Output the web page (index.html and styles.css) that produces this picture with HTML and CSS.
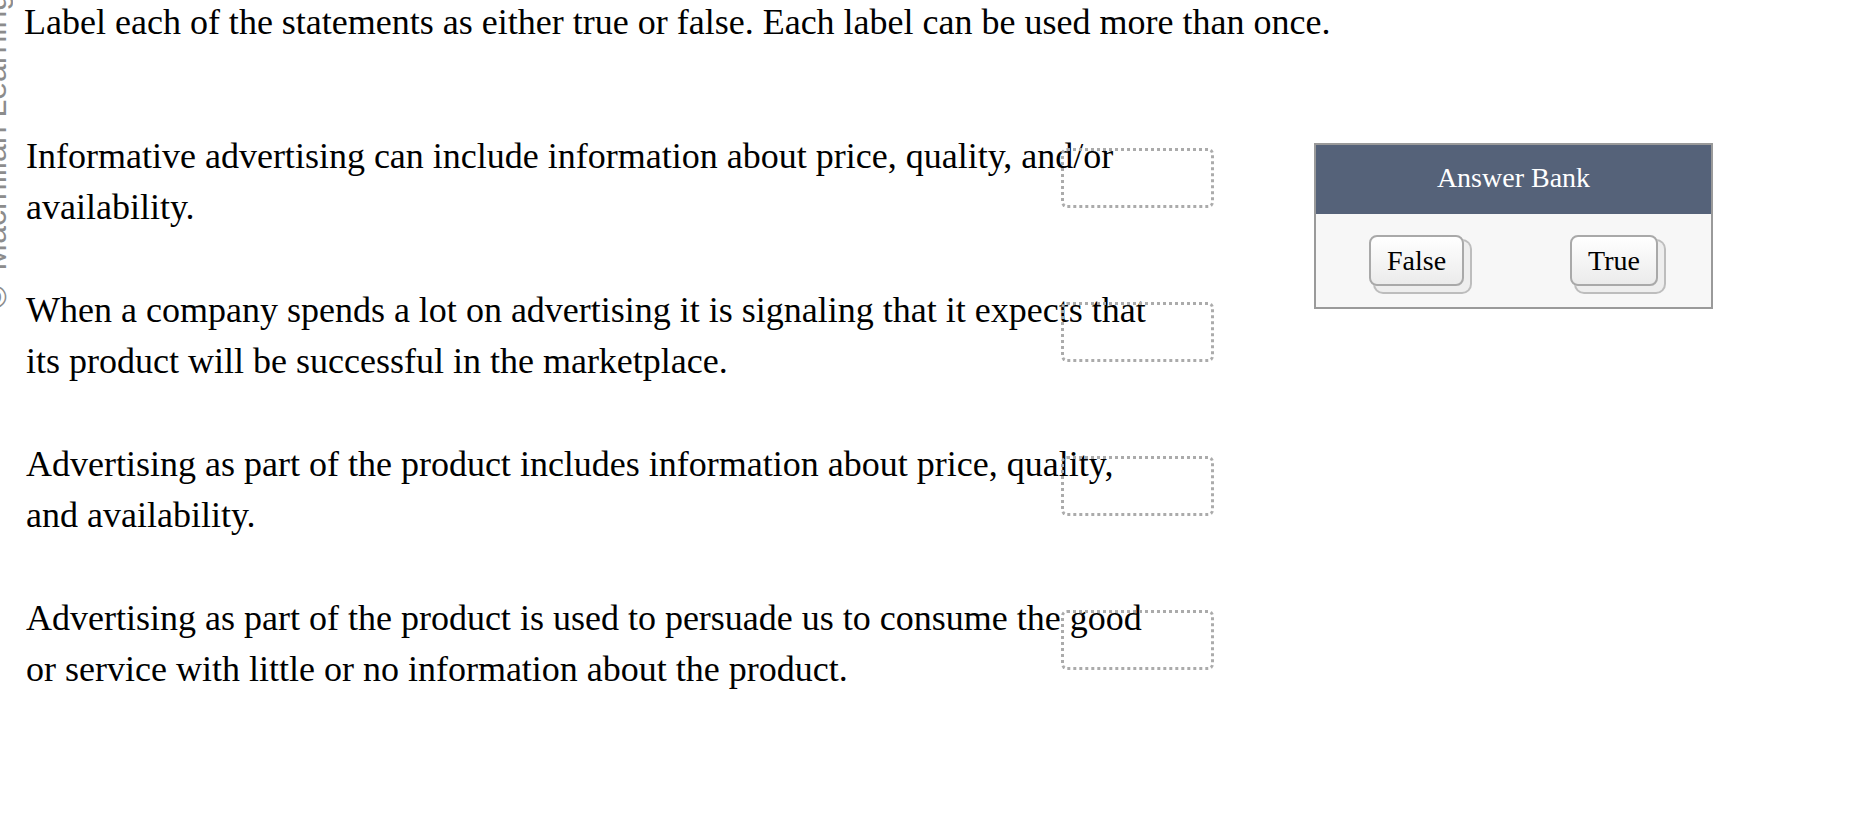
FILE: index.html
```html
<!DOCTYPE html>
<html lang="en">
<head>
<meta charset="utf-8">
<title>Label statements</title>
<link rel="stylesheet" href="styles.css">
</head>
<body>
<div class="watermark">© Macmillan Learning</div>
<h1 class="prompt">Label each of the statements as either true or false. Each label can be used more than once.</h1>
<div class="content">
  <div class="statements">
    <div class="statement">
      <p class="statement-text">Informative advertising can include information about price, quality, and/or availability.</p>
      <div class="drop-zone"></div>
    </div>
    <div class="statement">
      <p class="statement-text">When a company spends a lot on advertising it is signaling that it expects that its product will be successful in the marketplace.</p>
      <div class="drop-zone"></div>
    </div>
    <div class="statement">
      <p class="statement-text">Advertising as part of the product includes information about price, quality, and availability.</p>
      <div class="drop-zone"></div>
    </div>
    <div class="statement">
      <p class="statement-text">Advertising as part of the product is used to persuade us to consume the good or service with little or no information about the product.</p>
      <div class="drop-zone"></div>
    </div>
  </div>
  <div class="bank">
    <div class="bank-header">Answer Bank</div>
    <div class="bank-body">
      <div class="chip">False</div>
      <div class="chip">True</div>
    </div>
  </div>
</div>
</body>
</html>
```
FILE: styles.css
```css
html, body {
  margin: 0;
  padding: 0;
  background: #ffffff;
}

body {
  font-family: "Liberation Serif", "Times New Roman", serif;
  color: #000;
  position: relative;
  overflow: hidden;
}

.watermark {
  position: absolute;
  left: -21px;
  top: -7px;
  writing-mode: vertical-rl;
  transform: rotate(180deg);
  font-family: "Liberation Sans", Arial, sans-serif;
  font-size: 32px;
  line-height: 1;
  color: #8c8c8c;
  white-space: nowrap;
}

.prompt {
  margin: 0;
  padding: 1px 0 0 24px;
  font-size: 36px;
  font-weight: normal;
  line-height: normal;
}

.content {
  display: grid;
  grid-template-columns: 1188px 399px;
  column-gap: 100px;
  align-items: start;
  margin-top: 88px;
  padding-left: 26px;
}

.statements {
  display: flex;
  flex-direction: column;
  gap: 51.6px;
}

.statement {
  display: grid;
  grid-template-columns: 1035px 153px;
  align-items: start;
}

.statement-text {
  grid-column: 1 / 3;
  grid-row: 1;
  margin: 0;
  max-width: 1130px;
  font-size: 36px;
  line-height: 51.2px;
}

.drop-zone {
  grid-column: 2;
  grid-row: 1;
  margin-top: 17px;
  height: 60px;
  box-sizing: border-box;
  border: 3px dotted #ababab;
  border-radius: 6px;
}

.bank {
  margin-top: 12px;
  border: 2px solid #9a9a9a;
  background: #f7f7f7;
}

.bank-header {
  background: #556279;
  color: #ffffff;
  font-size: 28px;
  text-align: center;
  height: 69px;
  line-height: 66px;
}

.bank-body {
  display: flex;
  justify-content: space-around;
  padding: 21px 0 21px;
}

.chip {
  font-size: 28px;
  line-height: 32px;
  padding: 8px 16px 7px;
  border: 2px solid #a9a9a9;
  border-radius: 8px;
  background: linear-gradient(#ffffff, #ebebeb);
  box-shadow: 6px 6px 0 0 #eeeeee, 6px 6px 0 2px #bdbdbd;
}
```
